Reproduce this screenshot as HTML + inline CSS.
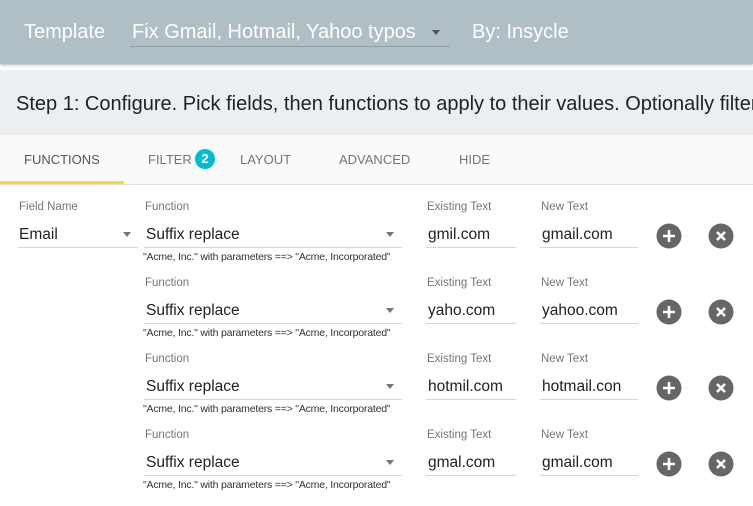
<!DOCTYPE html>
<html><head><style>
*{margin:0;padding:0;box-sizing:border-box}
body{width:753px;height:506px;overflow:hidden;background:#fff;font-family:"Liberation Sans",sans-serif;position:relative}
.a{position:absolute;white-space:nowrap}
.hdr{left:0;top:0;width:753px;height:64px;background:#b0bec5;box-shadow:0 1px 3px rgba(0,0,0,.3)}
.band{left:0;top:70px;width:753px;height:65px;background:#eceff1}
.tabs{left:0;top:135px;width:753px;height:50px;background:#fafafa;border-bottom:1px solid #e0e0e0}
.tab{top:152px;font-size:13px;color:#757575}
.lbl{font-size:11.5px;color:#757575}
.val{font-size:15.5px;color:#212121}
.ul{height:1px;background:#d6d6d6}
.hint{font-size:10.5px;color:#333;letter-spacing:-.2px}
.tri{width:0;height:0;border-left:4.5px solid transparent;border-right:4.5px solid transparent;border-top:5px solid #757575}
</style></head><body>
<div class="a hdr"></div>
<div class="a" style="left:24px;top:21px;font-size:20px;color:#fff">Template</div>
<div class="a" style="left:132px;top:21px;font-size:20px;color:#fff">Fix Gmail, Hotmail, Yahoo typos</div>
<div class="a tri" style="left:432px;top:30px;border-top-color:#555"></div>
<div class="a" style="left:130px;top:46px;width:320px;height:1px;background:#8fa0a8"></div>
<div class="a" style="left:472px;top:21px;font-size:20px;color:#fff">By: Insycle</div>
<div class="a band"></div>
<div class="a" style="left:16px;top:93px;font-size:20px;color:#212121">Step 1: Configure. Pick fields, then functions to apply to their values. Optionally filter</div>
<div class="a tabs"></div>
<div class="a tab" style="left:24px;color:#455a64">FUNCTIONS</div>
<div class="a" style="left:0;top:181px;width:124px;height:3px;background:#fdd835"></div>
<div class="a tab" style="left:148px">FILTER</div>
<div class="a" style="left:195px;top:149px;width:20px;height:20px;border-radius:50%;background:#00bcd4;color:#fff;font-size:13px;font-weight:bold;text-align:center;line-height:20px">2</div>
<div class="a tab" style="left:240px">LAYOUT</div>
<div class="a tab" style="left:339px">ADVANCED</div>
<div class="a tab" style="left:459px">HIDE</div>

<div class="a lbl" style="left:19px;top:201px">Field Name</div>
<div class="a val" style="left:19px;top:226px">Email</div>
<div class="a tri" style="left:123px;top:232px"></div>
<div class="a ul" style="left:18px;top:247px;width:120px"></div>

<div id="rows"></div>
<script>
var t=[["gmil.com","gmail.com"],["yaho.com","yahoo.com"],["hotmil.com","hotmail.con"],["gmal.com","gmail.com"]];
var h="";
for(var i=0;i<4;i++){var y=i*76;
h+='<div class="a lbl" style="left:145px;top:'+(201+y)+'px">Function</div>'+
'<div class="a val" style="left:146px;top:'+(226+y)+'px">Suffix replace</div>'+
'<div class="a tri" style="left:386px;top:'+(232+y)+'px"></div>'+
'<div class="a ul" style="left:144px;top:'+(247+y)+'px;width:258px"></div>'+
'<div class="a hint" style="left:143px;top:'+(251+y)+'px">"Acme, Inc." with parameters ==&gt; "Acme, Incorporated"</div>'+
'<div class="a lbl" style="left:427px;top:'+(201+y)+'px">Existing Text</div>'+
'<div class="a val" style="left:428px;top:'+(226+y)+'px;width:87px;overflow:hidden">'+t[i][0]+'</div>'+
'<div class="a ul" style="left:426px;top:'+(247+y)+'px;width:90px"></div>'+
'<div class="a lbl" style="left:541px;top:'+(201+y)+'px">New Text</div>'+
'<div class="a val" style="left:542px;top:'+(226+y)+'px;width:94px;overflow:hidden">'+t[i][1]+'</div>'+
'<div class="a ul" style="left:540px;top:'+(247+y)+'px;width:98px"></div>'+
'<svg class="a" style="left:656px;top:'+(223+y)+'px" width="26" height="26"><circle cx="13" cy="13" r="12.5" fill="#666"/><path d="M13 7v12M7 13h12" stroke="#fff" stroke-width="2.6"/></svg>'+
'<svg class="a" style="left:708px;top:'+(223+y)+'px" width="26" height="26"><circle cx="13" cy="13" r="12.5" fill="#666"/><path d="M9 9l8 8M17 9l-8 8" stroke="#fff" stroke-width="2.6"/></svg>';}
document.getElementById("rows").innerHTML=h;
</script>
</body></html>
